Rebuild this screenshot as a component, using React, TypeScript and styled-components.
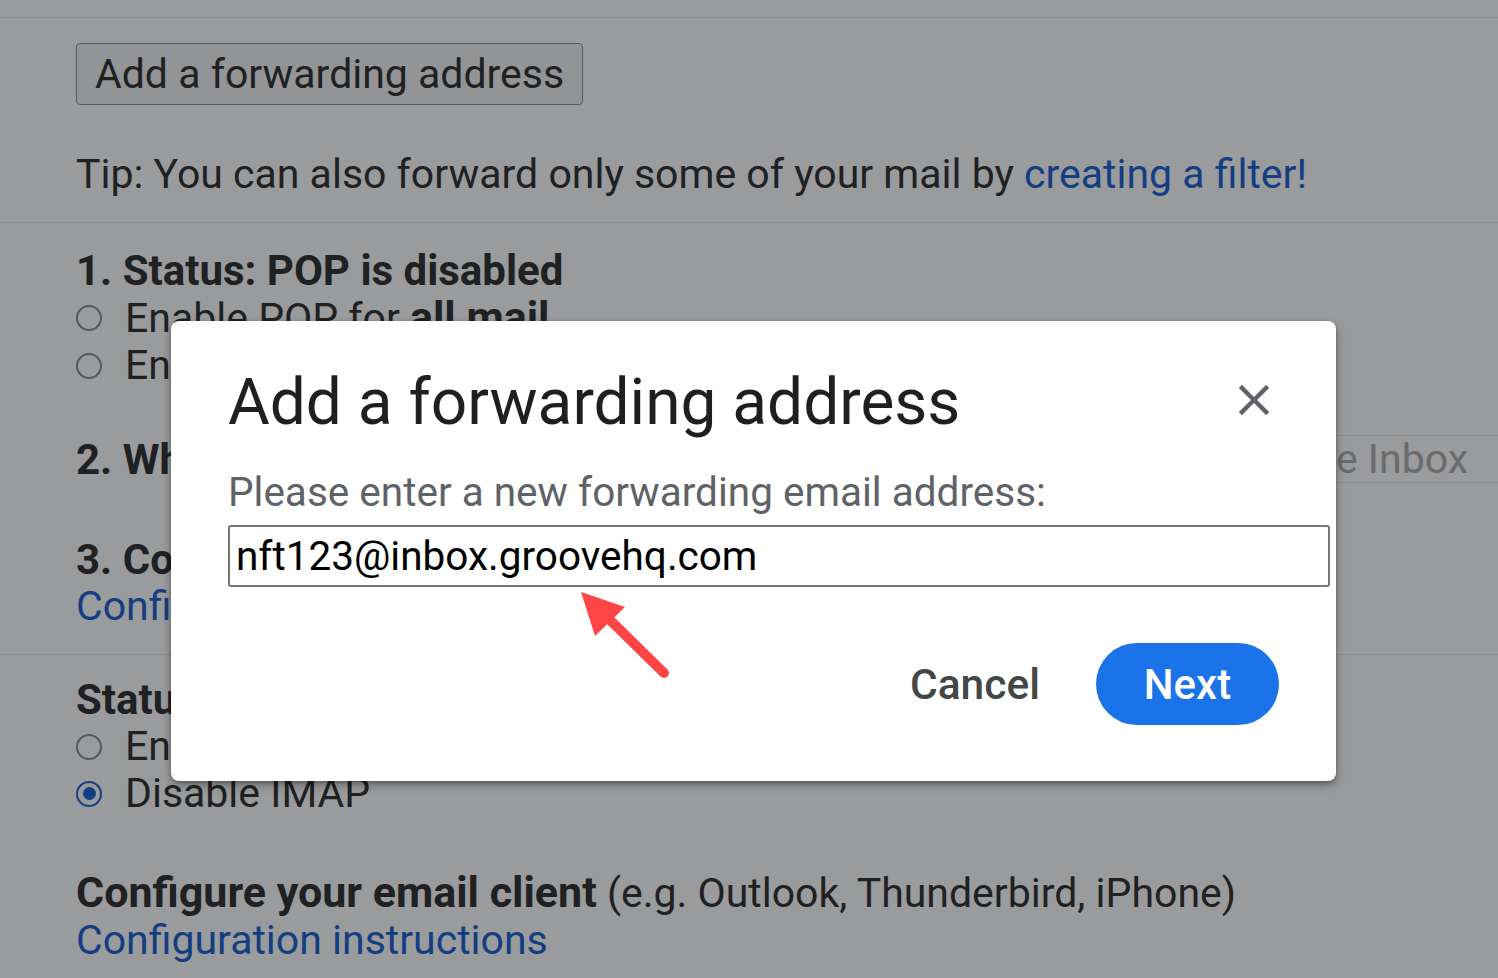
import React from 'react';
import styled, { createGlobalStyle } from 'styled-components';

const GlobalStyle = createGlobalStyle`
  html, body {
    margin: 0;
    height: 100%;
  }
  body {
    font-family: Roboto, "Liberation Sans", Arial, sans-serif;
    background: #ffffff;
    overflow: hidden;
  }
  #root {
    height: 100%;
  }
`;

const Page = styled.div`
  position: relative;
  height: 978px;
  background: #ffffff;
  color: #202124;
  font-size: 41px;
  line-height: 47px;
  overflow: hidden;
`;

const TopBar = styled.div`
  height: 17px;
  border-bottom: 1px solid #e3e3e3;
`;

const Section = styled.section<{ $pt: number; $pb: number; $last?: boolean }>`
  display: flex;
  flex-direction: column;
  padding: ${p => p.$pt}px 0 ${p => p.$pb}px 76px;
  border-bottom: ${p => (p.$last ? 'none' : '1px solid #e3e3e3')};
`;

const Block = styled.div<{ $mt?: number }>`
  display: flex;
  flex-direction: column;
  margin-top: ${p => p.$mt || 0}px;
`;

const OutlineButton = styled.button`
  align-self: flex-start;
  height: 62px;
  padding: 0 18px;
  border: 1px solid #8a8a8a;
  border-radius: 4px;
  background: #f2f2f2;
  color: #202124;
  font-family: inherit;
  font-size: 41px;
`;

const Line = styled.div<{ $mt?: number }>`
  margin-top: ${p => p.$mt || 0}px;
  white-space: nowrap;
`;

const Heading = styled.div`
  font-weight: 700;
  font-size: 42px;
  white-space: nowrap;
`;

const Strong = styled.b`
  font-size: 43px;
`;

const Link = styled.a`
  color: #0b57d0;
  text-decoration: none;
`;

const RadioRow = styled.label`
  display: flex;
  align-items: center;
  gap: 23px;
  white-space: nowrap;
`;

const Radio = styled.span<{ $checked?: boolean }>`
  box-sizing: border-box;
  flex: none;
  width: 26px;
  height: 26px;
  border-radius: 50%;
  border: 2.5px solid ${p => (p.$checked ? '#0b57d0' : '#80868b')};
  display: flex;
  align-items: center;
  justify-content: center;

  &::after {
    content: '';
    display: ${p => (p.$checked ? 'block' : 'none')};
    width: 13px;
    height: 13px;
    border-radius: 50%;
    background: #0b57d0;
  }
`;

const SelectRow = styled.div`
  display: flex;
  align-items: center;
  height: 48px;
  font-weight: 700;
  font-size: 42px;
  white-space: nowrap;
`;

const FakeSelect = styled.div`
  margin-left: auto;
  box-sizing: border-box;
  height: 48px;
  padding: 0 30px 0 24px;
  display: flex;
  align-items: center;
  border-top: 1px solid #e3e3e3;
  border-bottom: 1px solid #e3e3e3;
  color: #a8a8a8;
  font-size: 41px;
  font-weight: 400;
`;

const Scrim = styled.div`
  position: absolute;
  inset: 0;
  background: rgba(32, 33, 36, 0.45);
`;

const Dialog = styled.div`
  position: absolute;
  left: 171px;
  top: 321px;
  width: 1165px;
  height: 460px;
  box-sizing: border-box;
  padding: 46px 6px 0 57px;
  background: #ffffff;
  border-radius: 8px;
  box-shadow: 0 4px 10px rgba(0, 0, 0, 0.35), 0 1px 3px rgba(0, 0, 0, 0.2);
  display: flex;
  flex-direction: column;
`;

const DialogHeader = styled.div`
  display: flex;
  align-items: center;
  justify-content: space-between;
  padding-right: 50px;
`;

const Title = styled.h2`
  margin: 0;
  font-size: 64px;
  line-height: 72px;
  font-weight: 400;
  color: #1f1f1f;
  white-space: nowrap;
`;

const CloseButton = styled.button`
  width: 52px;
  height: 52px;
  padding: 0;
  border: none;
  background: transparent;
  display: flex;
  align-items: center;
  justify-content: center;
  margin-top: -6px;
`;

const Label = styled.div`
  margin-top: 30px;
  font-size: 40.5px;
  line-height: 46px;
  color: #5f6368;
  white-space: nowrap;
`;

const EmailInput = styled.input`
  margin-top: 10px;
  width: 1102px;
  height: 62px;
  box-sizing: border-box;
  padding: 0 6px;
  border: 2px solid #767676;
  border-radius: 3px;
  font-family: inherit;
  font-size: 40.5px;
  color: #000000;
  outline: none;
`;

const Footer = styled.div`
  margin-top: 56px;
  padding-right: 51px;
  display: flex;
  justify-content: flex-end;
  align-items: center;
  gap: 32px;
`;

const TextButton = styled.button`
  height: 82px;
  padding: 0 24px;
  border: none;
  background: transparent;
  font-family: inherit;
  font-size: 42.5px;
  font-weight: 500;
  color: #444746;
`;

const PrimaryButton = styled.button`
  width: 183px;
  height: 82px;
  border: none;
  border-radius: 41px;
  background: #1a73e8;
  color: #ffffff;
  font-family: inherit;
  font-size: 42px;
  font-weight: 500;
`;

const Arrow = styled.svg`
  position: absolute;
  left: 400px;
  top: 260px;
`;

export default function App() {
  return (
    <>
      <GlobalStyle />
      <Page>
        <TopBar />
        <Section $pt={25} $pb={24}>
          <OutlineButton>Add a forwarding address</OutlineButton>
          <Line $mt={46}>
            Tip: You can also forward only some of your mail by <Link>creating a filter!</Link>
          </Line>
        </Section>

        <Section $pt={24} $pb={24}>
          <Block>
            <Heading>1. Status: POP is disabled</Heading>
            <RadioRow>
              <Radio />
              <span>
                Enable POP for <Strong>all mail</Strong>
              </span>
            </RadioRow>
            <RadioRow>
              <Radio />
              <span>Enable POP for mail that arrives from now on</span>
            </RadioRow>
          </Block>
          <Block $mt={46}>
            <SelectRow>
              2. When messages are accessed with POP
              <FakeSelect>keep Gmail's copy in the Inbox</FakeSelect>
            </SelectRow>
          </Block>
          <Block $mt={53}>
            <Heading>3. Configure your email client</Heading>
            <Link>Configuration instructions</Link>
          </Block>
        </Section>

        <Section $pt={21} $pb={0} $last>
          <Block>
            <Heading>Status: IMAP is disabled</Heading>
            <RadioRow>
              <Radio />
              <span>Enable IMAP</span>
            </RadioRow>
            <RadioRow>
              <Radio $checked />
              <span>Disable IMAP</span>
            </RadioRow>
          </Block>
          <Block $mt={52}>
            <Line>
              <Strong>Configure your email client</Strong> (e.g. Outlook, Thunderbird, iPhone)
            </Line>
            <Link>Configuration instructions</Link>
          </Block>
        </Section>

        <Scrim />

        <Dialog>
          <DialogHeader>
            <Title>Add a forwarding address</Title>
            <CloseButton aria-label="Close">
              <svg width="52" height="52" viewBox="0 0 24 24">
                <path
                  fill="#5f6368"
                  d="M19 6.41L17.59 5 12 10.59 6.41 5 5 6.41 10.59 12 5 17.59 6.41 19 12 13.41 17.59 19 19 17.59 13.41 12z"
                />
              </svg>
            </CloseButton>
          </DialogHeader>
          <Label>Please enter a new forwarding email address:</Label>
          <EmailInput defaultValue="nft123@inbox.groovehq.com" />
          <Footer>
            <TextButton>Cancel</TextButton>
            <PrimaryButton>Next</PrimaryButton>
          </Footer>
          <Arrow width="110" height="110" viewBox="0 0 110 110">
            <line x1="40" y1="40" x2="93" y2="92" stroke="#ff4545" strokeWidth="10" strokeLinecap="round" />
            <polygon points="10,11 54,26 24,55" fill="#ff4545" />
          </Arrow>
        </Dialog>
      </Page>
    </>
  );
}
